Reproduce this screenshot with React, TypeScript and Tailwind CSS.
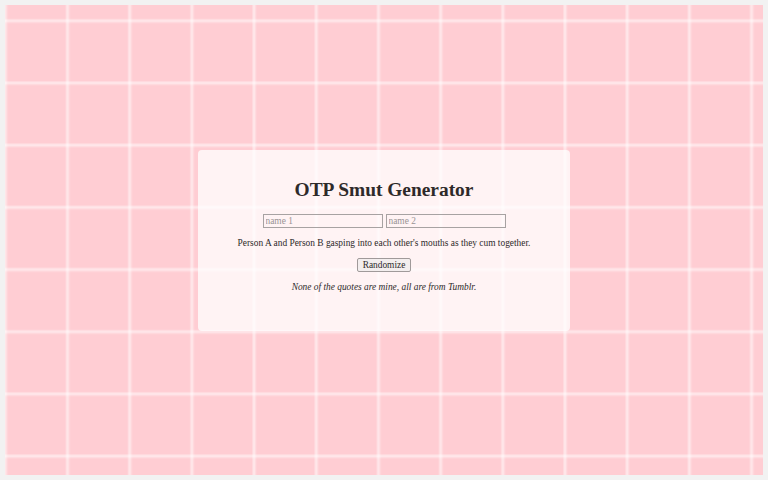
import { useState } from 'react'

const quotes = [
  "Person A and Person B gasping into each other's mouths as they cum together.",
]

export default function App() {
  const [name1, setName1] = useState('')
  const [name2, setName2] = useState('')
  const [quote, setQuote] = useState(quotes[0])

  const randomize = () => {
    setQuote(quotes[Math.floor(Math.random() * quotes.length)])
  }

  const a = name1 || 'Person A'
  const b = name2 || 'Person B'
  const text = quote.replace('Person A', a).replace('Person B', b)

  return (
    <div className="flex h-screen w-full items-center justify-center border-[5px] border-[#f2f2f2] bg-[#ffcdd3] bg-[linear-gradient(90deg,rgba(255,255,255,.15)_0,rgba(255,255,255,.6)_2px,rgba(255,255,255,.15)_4px,transparent_5px),linear-gradient(180deg,rgba(255,255,255,.15)_0,rgba(255,255,255,.6)_2px,rgba(255,255,255,.15)_4px,transparent_5px)] bg-[length:62.2px_62.2px] bg-[position:60.5px_13.8px] font-['Liberation_Serif',serif] text-[#2e2a2a]">
      <div className="flex h-[181px] w-[372px] flex-col items-center rounded-[4px] bg-white/75 pt-[29px] text-center">
        <h1 className="text-[19.4px] leading-[22px] font-bold">OTP Smut Generator</h1>
        <div className="mt-[13px] flex gap-[3px]">
          <input
            value={name1}
            onChange={(e) => setName1(e.target.value)}
            placeholder="name 1"
            className="h-[14px] w-[120px] border border-[#a7a2a2] bg-transparent px-[2px] text-[9.4px] leading-[12px] placeholder:text-[#9a9494] outline-none"
          />
          <input
            value={name2}
            onChange={(e) => setName2(e.target.value)}
            placeholder="name 2"
            className="h-[14px] w-[120px] border border-[#a7a2a2] bg-transparent px-[2px] text-[9.4px] leading-[12px] placeholder:text-[#9a9494] outline-none"
          />
        </div>
        <p className="mt-[9px] text-[9.4px] leading-[12px]">{text}</p>
        <button
          onClick={randomize}
          className="mt-[9px] h-[14px] rounded-[2px] border border-[#a09a9a] bg-[#f3eeee] px-[5px] text-[9.4px] leading-[12px]"
        >
          Randomize
        </button>
        <p className="mt-[9px] text-[9.4px] leading-[12px] italic">
          None of the quotes are mine, all are from Tumblr.
        </p>
      </div>
    </div>
  )
}
